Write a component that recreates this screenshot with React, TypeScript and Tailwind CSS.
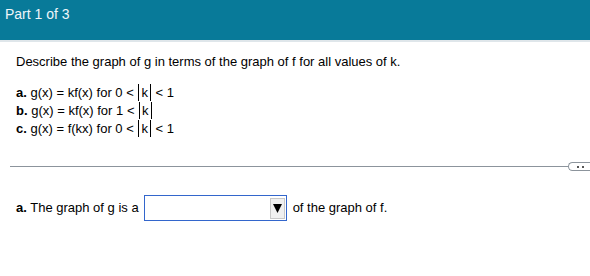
import React from 'react';

const Abs: React.FC<{ children: React.ReactNode }> = ({ children }) => (
  <span className="border-x border-black px-[2px] py-[1px] mx-[1px]">{children}</span>
);

export default function App() {
  return (
    <div className="w-[590px] h-[276px] bg-white text-black font-['Liberation_Sans',Arial,sans-serif] text-[13px] overflow-hidden">
      <div className="h-[42px] bg-[#087a99] px-[5px] pt-[4px] text-[14px] text-[#eef6fa] border-b-2 border-[#dfe6ea]">
        Part 1 of 3
      </div>

      <div className="pl-[16px] pt-[11px]">
        <p className="leading-[18px]">Describe the graph of g in terms of the graph of f for all values of k.</p>
        <div className="mt-[13px] leading-[18px]">
          <p>
            <b>a.</b> g(x) = kf(x) for 0 &lt; <Abs>k</Abs> &lt; 1
          </p>
          <p>
            <b>b.</b> g(x) = kf(x) for 1 &lt; <Abs>k</Abs>
          </p>
          <p>
            <b>c.</b> g(x) = f(kx) for 0 &lt; <Abs>k</Abs> &lt; 1
          </p>
        </div>
      </div>

      <div className="mt-[24px] flex items-center pl-[10px]">
        <div className="flex-1 h-px bg-[#8c949c]" />
        <div className="w-[22px] h-[9px] rounded-l-full border border-[#8c949c] border-r-0 flex items-center justify-center gap-[3px] pl-[2px]">
          <span className="w-[2px] h-[2px] bg-[#555]" />
          <span className="w-[2px] h-[2px] bg-[#555]" />
        </div>
      </div>

      <div className="mt-[24px] pl-[16px] flex items-center">
        <span>
          <b>a.</b> The graph of g is a
        </span>
        <div className="ml-[5px] w-[143px] h-[26px] border border-[#3366cc] flex items-center justify-end pr-[1px]">
          <div className="w-[15px] h-[21px] bg-[#f0f0f0] border border-[#c8c8c8] flex items-center justify-center">
            <svg width="9" height="10" viewBox="0 0 9 10">
              <path d="M0 1 L9 1 L4.5 10 Z" fill="#000" />
            </svg>
          </div>
        </div>
        <span className="ml-[6px]">of the graph of f.</span>
      </div>
    </div>
  );
}
